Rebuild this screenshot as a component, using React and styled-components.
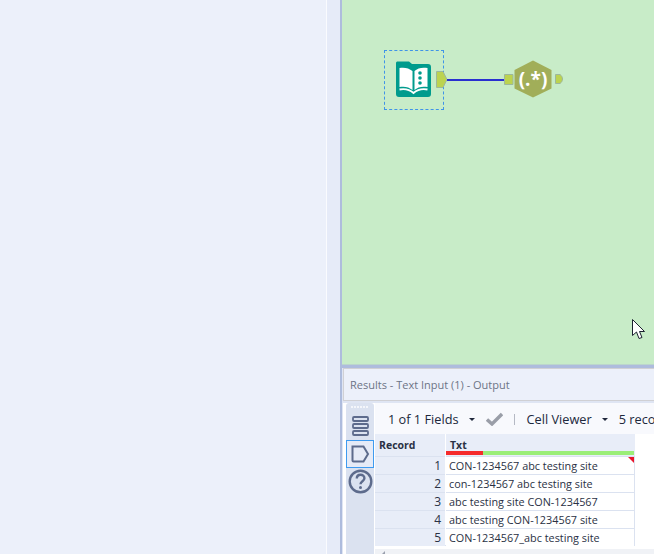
import React from 'react';
import styled, { createGlobalStyle } from 'styled-components';

const GlobalStyle = createGlobalStyle`
    html, body { margin: 0; padding: 0; background: #ecf0fa; overflow: hidden; }
    #root { width: 654px; height: 554px; }
`;

const Page = styled.div`
    display: flex;
    width: 654px;
    height: 554px;
    overflow: hidden;
    background: #ecf0fa;
    font-family: "Open Sans", "Noto Sans", sans-serif;
    color: #2c3550;
`;

const LeftPanel = styled.div`
    width: 326px;
    flex: none;
    background: #ecf0fa;
`;

const Gutter = styled.div`
    width: 14px;
    flex: none;
    background: #e6ebf8;
    border-left: 1px solid #fafbfe;
    box-sizing: border-box;
`;

const Workspace = styled.div`
    flex: 1;
    min-width: 0;
    display: flex;
    flex-direction: column;
    background: #aebcdd;
    padding-left: 2px;
`;

const Canvas = styled.div`
    position: relative;
    height: 364px;
    flex: none;
    background: #c8ecc8;
    border-bottom: 1px solid #bcd6cc;
`;

const Selection = styled.div`
    position: absolute;
    left: 42px;
    top: 50px;
    width: 58px;
    height: 58px;
    border: 1px dashed #3f94e8;
`;

const Drawing = styled.svg`
    position: absolute;
    left: ${({ $x }) => $x}px;
    top: ${({ $y }) => $y}px;
    overflow: visible;
`;

const Splitter = styled.div`
    height: 3px;
    flex: none;
    background: #aebcdd;
`;

const ResultsPanel = styled.div`
    flex: 1;
    min-height: 0;
    display: flex;
    flex-direction: column;
    background: #dfe5f3;
    padding-left: 1px;
`;

const TitleBar = styled.div`
    height: 30px;
    flex: none;
    display: flex;
    align-items: center;
    padding: 0 0 1px 6px;
    box-sizing: content-box;
    margin-bottom: 2px;
    background: #ecf0fa;
    border: 1px solid #d0d0d4;
    border-right: 0;
    font-size: 11px;
    color: #6d7486;
`;

const ResultsBody = styled.div`
    flex: 1;
    min-height: 0;
    display: flex;
    background: #fff;
`;

const SideRail = styled.div`
    width: 28px;
    margin: 0 1px 0 3px;
    flex: none;
    display: flex;
    flex-direction: column;
    align-items: center;
    background: #dbe2f0;
    border-radius: 3px 3px 0 0;
`;

const Grip = styled.div`
    width: 18px;
    height: 2px;
    margin: 3px 0 5px;
    flex: none;
    background: repeating-linear-gradient(90deg, #f4f6fb 0 2px, transparent 2px 3px);
`;

const RailButton = styled.div`
    width: ${({ $size }) => $size}px;
    height: ${({ $size }) => $size}px;
    margin-bottom: ${({ $gap }) => $gap || 0}px;
    flex: none;
    display: flex;
    align-items: center;
    justify-content: center;
    box-sizing: border-box;
    border: 1px solid ${({ $active }) => ($active ? '#3f9bf0' : 'transparent')};
    background: ${({ $active }) => ($active ? '#e6ebf7' : 'transparent')};
`;

const Main = styled.div`
    flex: 1;
    min-width: 0;
    display: flex;
    flex-direction: column;
    background: #fff;
`;

const Toolbar = styled.div`
    height: 31px;
    flex: none;
    display: flex;
    align-items: center;
    box-sizing: border-box;
    padding: 1px 0 0 13px;
    background: #f8f9fd;
    font-size: 12.75px;
    white-space: nowrap;
    overflow: hidden;
    color: #20283c;
`;

const Caret = styled.span`
    flex: none;
    width: 0;
    height: 0;
    margin: 0 ${({ $right }) => $right}px 0 ${({ $left }) => $left}px;
    border-left: 3px solid transparent;
    border-right: 3px solid transparent;
    border-top: 3px solid #20283c;
`;

const CheckIcon = styled.svg`
    flex: none;
`;

const Divider = styled.span`
    flex: none;
    width: 1px;
    height: 11px;
    margin: 0 12px 0 11px;
    background: #b5b9c4;
`;

const Table = styled.div`
    display: grid;
    grid-template-columns: 70px 190px;
    grid-template-rows: 22px repeat(5, 18px);
    width: 260px;
    flex: none;
    font-size: 10.85px;
    color: #2a3144;
    background: #fff;
    box-shadow: inset 0 -1px 0 #dbe2f0;
`;

const HeaderCell = styled.div`
    position: relative;
    display: flex;
    align-items: center;
    padding: 0 0 1px 4px;
    box-sizing: border-box;
    background: #e8edf8;
    margin-left: ${({ $gap }) => ($gap ? '1px' : '0')};
    font-size: 10.5px;
    font-weight: 700;
`;

const QualityBar = styled.div`
    position: absolute;
    left: 0;
    right: 1px;
    bottom: 1px;
    height: 4px;
    background: linear-gradient(90deg, #f52b2b 0 37px, #9bee78 37px);
`;

const RecordCell = styled.div`
    display: flex;
    align-items: center;
    justify-content: flex-end;
    padding-right: 4px;
    background: #e8edf8;
    border-top: 1px solid #dbe2f0;
    font-size: 12px;
`;

const TextCell = styled.div`
    position: relative;
    display: flex;
    align-items: center;
    padding-left: 3px;
    margin-left: 1px;
    background: #fff;
    border: solid #dbe2f0;
    border-width: 1px 1px 0 0;
    white-space: nowrap;
`;

const RedFlag = styled.span`
    position: absolute;
    top: 0;
    right: 0;
    border-top: 6px solid #e8142c;
    border-left: 6px solid transparent;
`;

const FooterStrip = styled.div`
    position: relative;
    flex: 1;
    margin-top: 3px;
    background: #f0f2f6;
    &::before {
        content: '';
        position: absolute;
        left: 7px;
        top: 2px;
        border-right: 3px solid #9aa0ae;
        border-top: 3px solid transparent;
        border-bottom: 3px solid transparent;
    }
`;

const rows = [
    'CON-1234567 abc testing site',
    'con-1234567 abc testing site',
    'abc testing site CON-1234567',
    'abc testing CON-1234567 site',
    'CON-1234567_abc testing site',
];

const BookNode = () => (
    <Drawing $x={53} $y={61} width="37" height="37" viewBox="0 0 37 37">
        <path d="M2 0.500h12l3 2.500h16a3 3 0 0 1 3 3v27a3 3 0 0 1-3 3H4a3 3 0 0 1-3-3V2.500a2 2 0 0 1 1-2z" fill="#009b8d" />
        <path d="M17.500 10C14 7 9 6 4.500 7v19c5-1 9.500 0 13 3z" fill="#fff" />
        <path d="M19.500 10c3-3 8-4 13-3v19c-5-1-10 0-13 3z" fill="#fff" />
        <path d="M4.500 28.500c5-1 10 0 14 3.500c4-3.500 9-4.500 14-3.500" fill="none" stroke="#fff" strokeWidth="1.800" />
        <circle cx="25" cy="12" r="1.800" fill="#009b8d" />
        <circle cx="25" cy="17" r="1.800" fill="#009b8d" />
        <circle cx="25" cy="22" r="1.800" fill="#009b8d" />
    </Drawing>
);

const Connection = () => (
    <Drawing $x={94} $y={70} width="130" height="20" viewBox="0 0 130 20">
        <path d="M0.500 1.500h6.500l4 8l-4 8h-6.500z" fill="#bcd350" stroke="#9db89a" />
        <path d="M11 10H68" stroke="#2a2fd0" strokeWidth="2" />
        <path d="M68.500 4.500h8.500v10h-8.500z" fill="#bcd350" stroke="#9db89a" />
    </Drawing>
);

const RegexNode = () => (
    <Drawing $x={172} $y={60} width="52" height="38" viewBox="0 0 52 38">
        <path d="M19 0.500L37.500 10V28.500L19 37.500L0.500 28.500V10z" fill="#a1ae59" />
        <text x="19" y="25.500" textAnchor="middle" fontFamily="Open Sans, sans-serif" fontWeight="700" fontSize="19" fill="#fff">(.*)</text>
        <path d="M41.500 14.500h4.500c1.500 1 2.500 2.800 2.500 4.500s-1 3.500-2.500 4.500h-4.500z" fill="#bcd350" stroke="#9db89a" />
    </Drawing>
);

const Cursor = () => (
    <Drawing $x={290} $y={319} width="14" height="21" viewBox="0 0 14 21">
        <path d="M0.500 0.500V16.500L4.500 13L7 19.500L10 18.500L7.500 12.500H12.500z" fill="#fff" stroke="#1c2230" />
    </Drawing>
);

const App = () => (
    <Page>
        <GlobalStyle />
        <LeftPanel />
        <Gutter />
        <Workspace>
            <Canvas>
                <Selection />
                <BookNode />
                <Connection />
                <RegexNode />
                <Cursor />
            </Canvas>
            <Splitter />
            <ResultsPanel>
                <TitleBar>Results - Text Input (1) - Output</TitleBar>
                <ResultsBody>
                    <SideRail>
                        <Grip />
                        <RailButton $size={26} $gap={1}>
                            <svg width="17" height="20" viewBox="0 0 17 20">
                                <g fill="none" stroke="#5d6b8c" strokeWidth="1.800">
                                    <rect x="1" y="1" width="15" height="4" rx="1" />
                                    <rect x="1" y="8" width="15" height="4" rx="1" />
                                    <rect x="1" y="15" width="15" height="4" rx="1" />
                                </g>
                            </svg>
                        </RailButton>
                        <RailButton $size={28} $active>
                            <svg width="20" height="20" viewBox="0 0 20 20">
                                <path d="M2.500 2.500h11l4.500 7.500l-4.500 7.500h-10a1 1 0 0 1-1-1z" fill="none" stroke="#5d6b8c" strokeWidth="2" />
                            </svg>
                        </RailButton>
                        <RailButton $size={27}>
                            <svg width="25" height="25" viewBox="0 0 25 25">
                                <circle cx="12.500" cy="12.500" r="10.800" fill="none" stroke="#5d6b8c" strokeWidth="2.400" />
                                <path d="M8.800 9.500c0-5 7.600-5 7.600-0.300c0 3-3.900 3-3.900 6" fill="none" stroke="#5d6b8c" strokeWidth="2.400" />
                                <circle cx="12.500" cy="18.500" r="1.500" fill="#5d6b8c" />
                            </svg>
                        </RailButton>
                    </SideRail>
                    <Main>
                        <Toolbar>
                            1 of 1 Fields
                            <Caret $left={10} $right={11} />
                            <CheckIcon width="17" height="14" viewBox="0 0 17 14">
                                <path d="M1 7.500L6 12L16 2" fill="none" stroke="#9a9ea8" strokeWidth="3.400" />
                            </CheckIcon>
                            <Divider />
                            Cell Viewer
                            <Caret $left={10} $right={11} />
                            5 records
                        </Toolbar>
                        <Table>
                            <HeaderCell>Record</HeaderCell>
                            <HeaderCell $gap>
                                Txt
                                <QualityBar />
                            </HeaderCell>
                            {rows.map((text, i) => (
                                <React.Fragment key={text}>
                                    <RecordCell>{i + 1}</RecordCell>
                                    <TextCell>
                                        {text}
                                        {i === 0 && <RedFlag />}
                                    </TextCell>
                                </React.Fragment>
                            ))}
                        </Table>
                        <FooterStrip />
                    </Main>
                </ResultsBody>
            </ResultsPanel>
        </Workspace>
    </Page>
);

export default App;
